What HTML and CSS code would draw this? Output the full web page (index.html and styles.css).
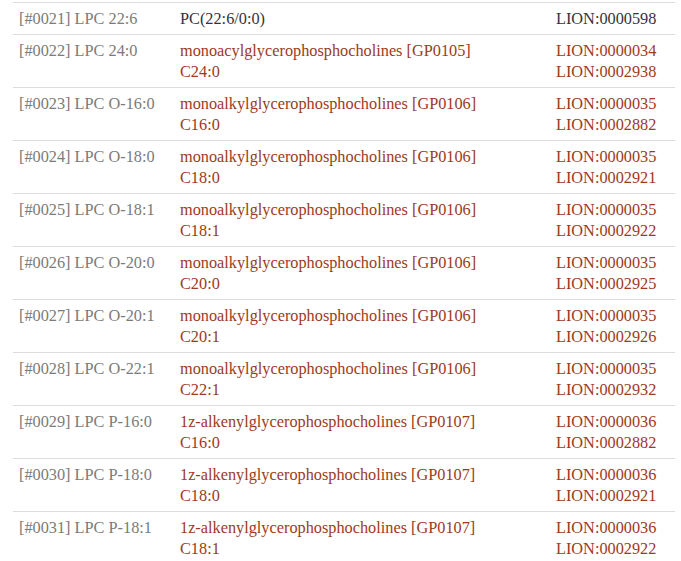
FILE: index.html
```html
<!DOCTYPE html>
<html>
<head>
<meta charset="utf-8">
<link rel="stylesheet" href="styles.css">
</head>
<body>
<div class="wrap">
<table class="lion">
<colgroup><col class="c1"><col class="c2"><col class="c3"></colgroup>
<tbody>
<tr><td class="id">[#0021] LPC 22:6</td><td class="plain">PC(22:6/0:0)</td><td class="plain">LION:0000598</td></tr>
<tr><td class="id">[#0022] LPC 24:0</td><td class="link">monoacylglycerophosphocholines [GP0105]<br>C24:0</td><td class="link">LION:0000034<br>LION:0002938</td></tr>
<tr><td class="id">[#0023] LPC O-16:0</td><td class="link">monoalkylglycerophosphocholines [GP0106]<br>C16:0</td><td class="link">LION:0000035<br>LION:0002882</td></tr>
<tr><td class="id">[#0024] LPC O-18:0</td><td class="link">monoalkylglycerophosphocholines [GP0106]<br>C18:0</td><td class="link">LION:0000035<br>LION:0002921</td></tr>
<tr><td class="id">[#0025] LPC O-18:1</td><td class="link">monoalkylglycerophosphocholines [GP0106]<br>C18:1</td><td class="link">LION:0000035<br>LION:0002922</td></tr>
<tr><td class="id">[#0026] LPC O-20:0</td><td class="link">monoalkylglycerophosphocholines [GP0106]<br>C20:0</td><td class="link">LION:0000035<br>LION:0002925</td></tr>
<tr><td class="id">[#0027] LPC O-20:1</td><td class="link">monoalkylglycerophosphocholines [GP0106]<br>C20:1</td><td class="link">LION:0000035<br>LION:0002926</td></tr>
<tr><td class="id">[#0028] LPC O-22:1</td><td class="link">monoalkylglycerophosphocholines [GP0106]<br>C22:1</td><td class="link">LION:0000035<br>LION:0002932</td></tr>
<tr><td class="id">[#0029] LPC P-16:0</td><td class="link">1z-alkenylglycerophosphocholines [GP0107]<br>C16:0</td><td class="link">LION:0000036<br>LION:0002882</td></tr>
<tr><td class="id">[#0030] LPC P-18:0</td><td class="link">1z-alkenylglycerophosphocholines [GP0107]<br>C18:0</td><td class="link">LION:0000036<br>LION:0002921</td></tr>
<tr><td class="id">[#0031] LPC P-18:1</td><td class="link">1z-alkenylglycerophosphocholines [GP0107]<br>C18:1</td><td class="link">LION:0000036<br>LION:0002922</td></tr>
</tbody>
</table>
</div>
</body>
</html>
```
FILE: styles.css
```css
html, body {
  margin: 0;
  padding: 0;
  background: #ffffff;
}
.wrap {
  padding: 2px 6px 0 13px;
}
.lion {
  width: 662px;
  border-collapse: collapse;
  table-layout: fixed;
  font-family: "Liberation Serif", "Times New Roman", serif;
  font-size: 16.3px;
  line-height: 21px;
  font-variant-numeric: oldstyle-nums;
}
.c1 { width: 161px; }
.c2 { width: 376px; }
.c3 { width: 125px; }
.lion td {
  border-top: 1px solid #dddddd;
  padding: 5px 6px;
  vertical-align: top;
  white-space: nowrap;
}
.id { color: #7b7b7b; }
.plain { color: #333340; }
.link { color: #9c3a22; }
```
